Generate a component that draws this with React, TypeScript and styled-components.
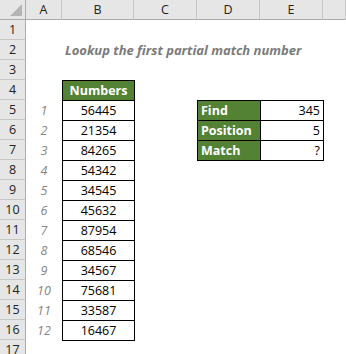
import React from 'react';
import styled, { createGlobalStyle } from 'styled-components';

const GlobalStyle = createGlobalStyle`
  html, body {
    margin: 0;
    padding: 0;
    background: #ffffff;
    overflow: hidden;
  }
`;

const Sheet = styled.div`
  display: grid;
  grid-template-columns: 26px 36px 72px 63px 63px 63px 1fr;
  grid-auto-rows: 20px;
  width: 346px;
  height: 354px;
  overflow: hidden;
  font-family: 'Open Sans', 'Liberation Sans', sans-serif;
  font-size: 12.5px;
  color: #000;
`;

const Corner = styled.div`
  background: #e6e6e6;
  border-right: 1px solid #ababab;
  border-bottom: 1px solid #ababab;
  position: relative;
  box-sizing: border-box;

  &::after {
    content: '';
    position: absolute;
    right: 3px;
    bottom: 3px;
    width: 0;
    height: 0;
    border-left: 12px solid transparent;
    border-bottom: 12px solid #b4b4b4;
  }
`;

const ColHead = styled.div`
  background: #e6e6e6;
  border-right: 1px solid #c6c6c6;
  border-bottom: 1px solid #ababab;
  box-sizing: border-box;
  display: flex;
  align-items: center;
  justify-content: center;
  color: #222;
`;

const RowHead = styled.div`
  background: #e6e6e6;
  border-right: 1px solid #ababab;
  border-bottom: 1px solid #c6c6c6;
  box-sizing: border-box;
  display: flex;
  align-items: center;
  justify-content: center;
  color: #222;
`;

const Cell = styled.div<{
  $align?: 'left' | 'center' | 'right';
  $boxed?: boolean;
  $fill?: string;
  $bold?: boolean;
  $italic?: boolean;
  $color?: string;
}>`
  box-sizing: border-box;
  display: flex;
  align-items: center;
  justify-content: ${({ $align }) =>
    $align === 'center' ? 'center' : $align === 'right' ? 'flex-end' : 'flex-start'};
  padding: 0 3px;
  white-space: nowrap;
  overflow: visible;
  background: ${({ $fill }) => $fill || 'transparent'};
  font-weight: ${({ $bold }) => ($bold ? 700 : 400)};
  font-style: ${({ $italic }) => ($italic ? 'italic' : 'normal')};
  color: ${({ $color }) => $color || '#000'};
  ${({ $boxed }) =>
    $boxed &&
    `
    border: 1px solid #000;
    margin: 0 -1px -1px 0;
    position: relative;
  `}
`;

const Title = styled.span`
  font-weight: 700;
  font-style: italic;
  color: #7b7b7b;
  font-size: 13px;
`;

const GREEN = '#548235';
const GRAY = '#858585';

const numbers = [56445, 21354, 84265, 54342, 34545, 45632, 87954, 68546, 34567, 75681, 33587, 16467];

const lookup: Record<number, [string, string]> = {
  5: ['Find', '345'],
  6: ['Position', '5'],
  7: ['Match', '?'],
};

const cols = ['A', 'B', 'C', 'D', 'E', ''];

const App: React.FC = () => {
  const rows = [];
  for (let r = 1; r <= 17; r++) {
    const cells: React.ReactNode[] = [];
    cells.push(<RowHead key={`h${r}`}>{r}</RowHead>);

    // column A: index numbers
    const idx = r >= 5 && r <= 16 ? r - 4 : null;
    cells.push(
      <Cell key={`a${r}`} $align="center" $italic $color={GRAY}>
        {idx ?? ''}
      </Cell>
    );

    // column B: title row / numbers list
    if (r === 2) {
      cells.push(
        <Cell key={`b${r}`}>
          <Title>Lookup the first partial match number</Title>
        </Cell>
      );
    } else if (r === 4) {
      cells.push(
        <Cell key={`b${r}`} $boxed $align="center" $fill={GREEN} $bold $color="#fff">
          Numbers
        </Cell>
      );
    } else if (idx) {
      cells.push(
        <Cell key={`b${r}`} $boxed $align="center">
          {numbers[idx - 1]}
        </Cell>
      );
    } else {
      cells.push(<Cell key={`b${r}`} />);
    }

    cells.push(<Cell key={`c${r}`} />);

    // columns D/E: lookup box
    const item = lookup[r];
    if (item) {
      cells.push(
        <Cell key={`d${r}`} $boxed $fill={GREEN} $bold $color="#fff">
          {item[0]}
        </Cell>
      );
      cells.push(
        <Cell key={`e${r}`} $boxed $align="right">
          {item[1]}
        </Cell>
      );
    } else {
      cells.push(<Cell key={`d${r}`} />);
      cells.push(<Cell key={`e${r}`} />);
    }

    cells.push(<Cell key={`f${r}`} />);
    rows.push(...cells);
  }

  return (
    <>
      <GlobalStyle />
      <Sheet>
        <Corner />
        {cols.map((c, i) => (
          <ColHead key={i}>{c}</ColHead>
        ))}
        {rows}
      </Sheet>
    </>
  );
};

export default App;
